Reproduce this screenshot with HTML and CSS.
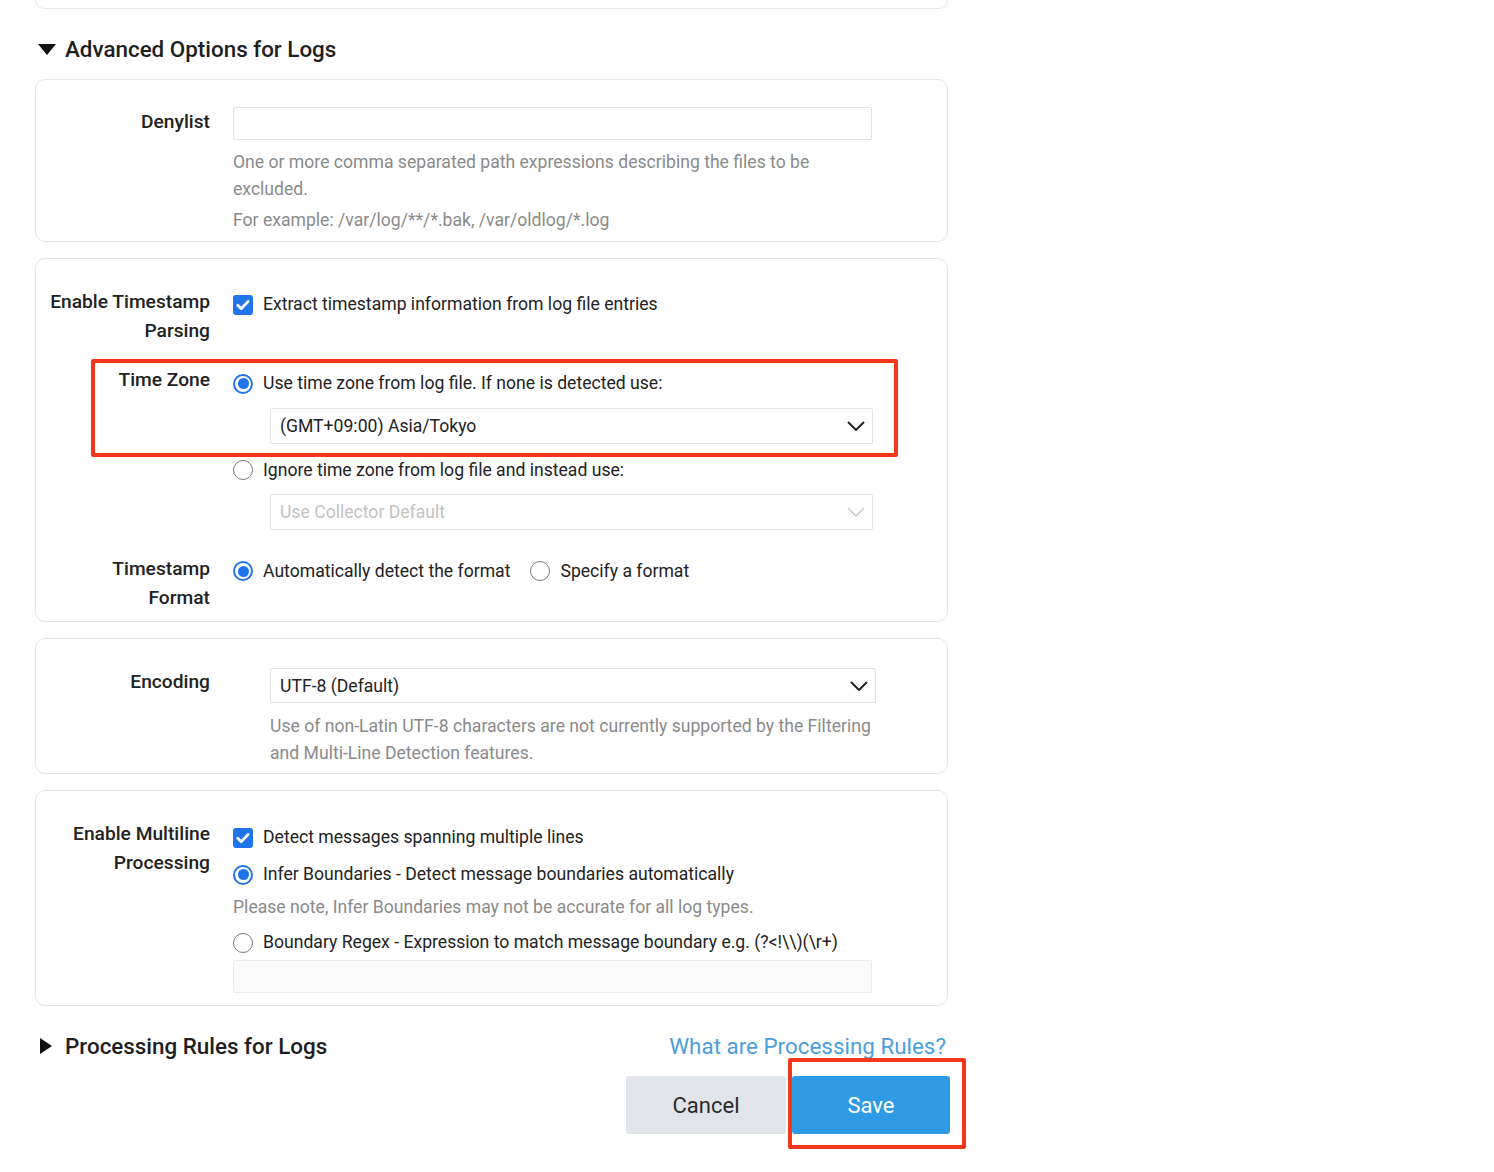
FILE: index.html
```html
<!DOCTYPE html>
<html lang="en">
<head>
<meta charset="utf-8">
<title>Advanced Options for Logs</title>
<link rel="stylesheet" href="styles.css">
</head>
<body>
<div class="page">
  <div class="card-tail"></div>

  <h2 class="section-title"><span class="tri tri-down"></span>Advanced Options for Logs</h2>

  <div class="card card-deny">
    <div class="row">
      <div class="label">Denylist</div>
      <div class="control">
        <div class="text-input"></div>
        <p class="help help-first">One or more comma separated path expressions describing the files to be excluded.</p>
        <p class="help help-example">For example: /var/log/**/*.bak, /var/oldlog/*.log</p>
      </div>
    </div>
  </div>

  <div class="card card-ts">
    <div class="row">
      <div class="label">Enable Timestamp Parsing</div>
      <div class="control">
        <div class="opt"><span class="checkbox"><svg viewBox="0 0 20 20" width="20" height="20"><path d="M4.8 10.3l3.4 3.4L15.2 6.4" fill="none" stroke="#fff" stroke-width="2.8" stroke-linecap="round" stroke-linejoin="round"/></svg></span>Extract timestamp information from log file entries</div>
      </div>
    </div>
    <div class="row row-tz">
      <div class="highlight hl-tz"></div>
      <div class="label">Time Zone</div>
      <div class="control">
        <div class="opt"><span class="radio on"></span>Use time zone from log file. If none is detected use:</div>
        <div class="select sel-tz"><span>(GMT+09:00) Asia/Tokyo</span><svg class="chev" viewBox="0 0 18 10" width="18" height="10"><path d="M1 1l8 8 8-8" fill="none" stroke="#222" stroke-width="2"/></svg></div>
        <div class="opt opt-ignore"><span class="radio"></span>Ignore time zone from log file and instead use:</div>
        <div class="select sel-tz sel-dis disabled"><span>Use Collector Default</span><svg class="chev" viewBox="0 0 18 10" width="18" height="10"><path d="M1 1l8 8 8-8" fill="none" stroke="#c8c8c8" stroke-width="1.5"/></svg></div>
      </div>
    </div>
    <div class="row row-fmt">
      <div class="label">Timestamp Format</div>
      <div class="control">
        <div class="opt-inline">
          <div class="opt"><span class="radio on"></span>Automatically detect the format</div>
          <div class="opt"><span class="radio"></span>Specify a format</div>
        </div>
      </div>
    </div>
  </div>

  <div class="card card-enc">
    <div class="row">
      <div class="label">Encoding</div>
      <div class="control indent">
        <div class="select sel-enc"><span>UTF-8 (Default)</span><svg class="chev" viewBox="0 0 18 10" width="18" height="10"><path d="M1 1l8 8 8-8" fill="none" stroke="#222" stroke-width="2"/></svg></div>
        <p class="help help-first">Use of non-Latin UTF-8 characters are not currently supported by the Filtering and Multi-Line Detection features.</p>
      </div>
    </div>
  </div>

  <div class="card card-ml">
    <div class="row">
      <div class="label">Enable Multiline Processing</div>
      <div class="control">
        <div class="opt"><span class="checkbox"><svg viewBox="0 0 20 20" width="20" height="20"><path d="M4.8 10.3l3.4 3.4L15.2 6.4" fill="none" stroke="#fff" stroke-width="2.8" stroke-linecap="round" stroke-linejoin="round"/></svg></span>Detect messages spanning multiple lines</div>
        <div class="opt opt-infer"><span class="radio on"></span>Infer Boundaries - Detect message boundaries automatically</div>
        <p class="help help-note">Please note, Infer Boundaries may not be accurate for all log types.</p>
        <div class="opt opt-regex"><span class="radio"></span>Boundary Regex - Expression to match message boundary e.g. (?&lt;!\\)(\r+)</div>
        <div class="text-input regex-input"></div>
      </div>
    </div>
  </div>

  <div class="footer-head">
    <h2 class="section-title"><span class="tri tri-right"></span>Processing Rules for Logs</h2>
    <a class="help-link" href="#">What are Processing Rules?</a>
  </div>

  <div class="actions">
    <button class="btn btn-cancel" type="button">Cancel</button>
    <div class="save-wrap">
      <div class="highlight hl-save"></div>
      <button class="btn btn-save" type="button">Save</button>
    </div>
  </div>
</div>
</body>
</html>
```

FILE: styles.css
```css
* { box-sizing: border-box; }

html, body {
  margin: 0;
  padding: 0;
  background: #ffffff;
}

body {
  font-family: Roboto, "Liberation Sans", Arial, sans-serif;
  color: #222222;
  font-size: 17.6px;
}

.page {
  width: 913px;
  margin-left: 35px;
  padding-bottom: 24px;
}

.card-tail {
  height: 9px;
  border: 1px solid #e6e6e6;
  border-top: none;
  border-radius: 0 0 10px 10px;
}

.section-title {
  display: flex;
  align-items: center;
  margin: 0;
  height: 30px;
  font-size: 22.4px;
  font-weight: 500;
  color: #1e1e1e;
  line-height: 30px;
  white-space: nowrap;
}

.page > .section-title {
  margin-top: 25px;
  margin-bottom: 15px;
}

.tri {
  display: inline-block;
  width: 0;
  height: 0;
}

.tri-down {
  margin-left: 3px;
  border-left: 9px solid transparent;
  border-right: 9px solid transparent;
  border-top: 11px solid #111;
  margin-right: 9px;
}

.tri-right {
  margin-left: 5px;
  border-top: 8px solid transparent;
  border-bottom: 8px solid transparent;
  border-left: 12px solid #111;
  margin-right: 13px;
}

.card {
  border: 1px solid #e6e6e6;
  border-radius: 10px;
  padding: 0 14px;
  margin-bottom: 16px;
}

.row {
  display: flex;
  align-items: flex-start;
  position: relative;
}

.label {
  flex: 0 0 160px;
  width: 160px;
  text-align: right;
  font-size: 19.2px;
  font-weight: 500;
  line-height: 29px;
  color: #222;
}

.control {
  flex: 0 0 auto;
  width: 640px;
  margin-left: 23px;
}

.control.indent {
  padding-left: 37px;
  width: 642px;
}

.text-input {
  height: 33px;
  width: 639px;
  border: 1px solid #e2e2e2;
  border-radius: 2px;
  background: #fff;
}

.help {
  margin: 0;
  color: #8a8a8a;
  font-size: 17.6px;
  line-height: 27px;
}

/* Denylist card */
.card-deny { padding-top: 27px; padding-bottom: 7px; }
.card-deny .label { margin-top: 0; }
.card-deny .help-first { margin-top: 9px; padding-right: 40px; }
.card-deny .help-example { margin-top: 4px; }

/* option lines */
.opt {
  display: flex;
  align-items: center;
  height: 29px;
  line-height: 29px;
  font-size: 17.6px;
  color: #222;
  white-space: nowrap;
}

.checkbox {
  flex: 0 0 20px;
  width: 20px;
  height: 20px;
  border-radius: 3px;
  background: #1f74ea;
  margin-right: 10px;
  display: inline-flex;
}

.radio {
  flex: 0 0 20px;
  width: 20px;
  height: 20px;
  border-radius: 50%;
  border: 1.5px solid #7a7a7a;
  margin-right: 10px;
  position: relative;
  background: #fff;
}

.radio.on {
  border: 2px solid #1f74ea;
}

.radio.on::after {
  content: "";
  position: absolute;
  left: 2.5px;
  top: 2.5px;
  width: 11px;
  height: 11px;
  border-radius: 50%;
  background: #1f74ea;
}

.select {
  display: flex;
  align-items: center;
  justify-content: space-between;
  border: 1px solid #e2e2e2;
  border-radius: 2px;
  background: #fff;
  padding: 0 7px 0 9px;
  font-size: 17.6px;
  color: #222;
}

.sel-tz {
  margin-left: 37px;
  width: 603px;
  height: 36px;
}

.select.disabled { color: #c2c2c2; }

.sel-enc {
  width: 606px;
  height: 35px;
}

/* Timestamp card */
.card-ts { padding-top: 28px; padding-bottom: 9.5px; }
.card-ts .row:first-child .control { margin-top: 3px; }
.row-tz { margin-top: 20px; }
.row-tz .control { margin-top: 4px; }
.sel-tz { margin-top: 10px; }
.opt-ignore { margin-top: 11.5px; }
.sel-tz.sel-dis { margin-top: 9.5px; }
.row-fmt { margin-top: 23.5px; }
.row-fmt .control { margin-top: 3px; }

.opt-inline {
  display: flex;
  gap: 20px;
}

/* Encoding card */
.card-enc { padding-top: 29px; padding-bottom: 6.5px; }
.card-enc .label { margin-top: -1.5px; }
.card-enc .help-first { margin-top: 9.5px; }

/* Multiline card */
.card-ml { padding-top: 28px; padding-bottom: 12px; }
.card-ml .control { margin-top: 4px; }
.opt-infer { margin-top: 8px; }
.help-note { margin-top: 5px; }
.opt-regex { margin-top: 7px; }
.regex-input {
  margin-top: 3px;
  background: #fafafa;
  border-color: #ececec;
}

/* Footer */
.footer-head {
  display: flex;
  align-items: center;
  justify-content: space-between;
  margin-top: 25px;
}

.help-link {
  font-size: 22.4px;
  color: #4a9fda;
  text-decoration: none;
  line-height: 30px;
  margin-right: 2px;
}

.actions {
  display: flex;
  justify-content: flex-end;
  gap: 6px;
  margin-top: 15px;
  margin-right: -2px;
}

.btn {
  height: 58px;
  border: none;
  border-radius: 3px;
  font-family: Roboto, "Liberation Sans", Arial, sans-serif;
  font-size: 22px;
  cursor: pointer;
}

.btn-cancel {
  width: 160px;
  background: #e1e5ea;
  color: #2a2a2a;
}

.btn-save {
  width: 158px;
  background: #2f9be4;
  color: #fff;
  display: block;
}

.save-wrap { position: relative; }

.highlight {
  position: absolute;
  border: 4px solid #f2371b;
  border-radius: 2px;
  pointer-events: none;
  z-index: 2;
}

.hl-tz {
  left: 41px;
  top: -6px;
  width: 807px;
  height: 98px;
}

.hl-save {
  left: -4px;
  top: -18px;
  width: 178px;
  height: 91px;
}
```
